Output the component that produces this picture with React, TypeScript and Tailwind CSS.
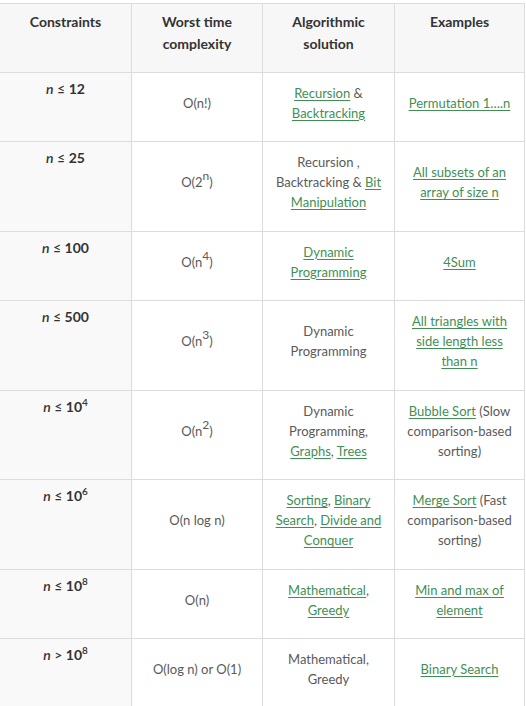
import React from "react";

const L = ({ children }: { children: React.ReactNode }) => (
  <a className="text-[#3f8f55] underline underline-offset-2 decoration-1">{children}</a>
);

const Sup = ({ children }: { children: React.ReactNode }) => (
  <sup className="text-[10px] relative -top-[6px] font-semibold">{children}</sup>
);

const BigSup = ({ children }: { children: React.ReactNode }) => (
  <sup className="text-[12px] relative -top-[7px]">{children}</sup>
);

type Row = { h: string; op: string; c: React.ReactNode; t: React.ReactNode; a: React.ReactNode; e: React.ReactNode };

const rows: Row[] = [
  {
    h: "h-[69px]",
    op: "≤",
    c: <>12</>,
    t: <>O(n!)</>,
    a: (
      <>
        <L>Recursion</L> &amp;
        <br />
        <L>Backtracking</L>
      </>
    ),
    e: <L>Permutation 1….n</L>,
  },
  {
    h: "h-[90px]",
    op: "≤",
    c: <>25</>,
    t: (
      <>
        O(2<BigSup>n</BigSup>)
      </>
    ),
    a: (
      <>
        Recursion ,<br />
        Backtracking &amp; <L>Bit</L>
        <br />
        <L>Manipulation</L>
      </>
    ),
    e: (
      <>
        <L>All subsets of an</L>
        <br />
        <L>array of size n</L>
      </>
    ),
  },
  {
    h: "h-[69px]",
    op: "≤",
    c: <>100</>,
    t: (
      <>
        O(n<BigSup>4</BigSup>)
      </>
    ),
    a: (
      <>
        <L>Dynamic</L>
        <br />
        <L>Programming</L>
      </>
    ),
    e: <L>4Sum</L>,
  },
  {
    h: "h-[90px]",
    op: "≤",
    c: <>500</>,
    t: (
      <>
        O(n<BigSup>3</BigSup>)
      </>
    ),
    a: (
      <>
        Dynamic
        <br />
        Programming
      </>
    ),
    e: (
      <>
        <L>All triangles with</L>
        <br />
        <L>side length less</L>
        <br />
        <L>than n</L>
      </>
    ),
  },
  {
    h: "h-[89px]",
    op: "≤",
    c: (
      <>
        10<Sup>4</Sup>
      </>
    ),
    t: (
      <>
        O(n<BigSup>2</BigSup>)
      </>
    ),
    a: (
      <>
        Dynamic
        <br />
        Programming,
        <br />
        <L>Graphs</L>, <L>Trees</L>
      </>
    ),
    e: (
      <>
        <L>Bubble Sort</L> (Slow
        <br />
        comparison-based
        <br />
        sorting)
      </>
    ),
  },
  {
    h: "h-[90px]",
    op: "≤",
    c: (
      <>
        10<Sup>6</Sup>
      </>
    ),
    t: <>O(n log n)</>,
    a: (
      <>
        <L>Sorting</L>, <L>Binary</L>
        <br />
        <L>Search</L>, <L>Divide and</L>
        <br />
        <L>Conquer</L>
      </>
    ),
    e: (
      <>
        <L>Merge Sort</L> (Fast
        <br />
        comparison-based
        <br />
        sorting)
      </>
    ),
  },
  {
    h: "h-[69px]",
    op: "≤",
    c: (
      <>
        10<Sup>8</Sup>
      </>
    ),
    t: <>O(n)</>,
    a: (
      <>
        <L>Mathematical</L>,
        <br />
        <L>Greedy</L>
      </>
    ),
    e: (
      <>
        <L>Min and max of</L>
        <br />
        <L>element</L>
      </>
    ),
  },
  {
    h: "h-[69px]",
    op: ">",
    c: (
      <>
        10<Sup>8</Sup>
      </>
    ),
    t: <>O(log n) or O(1)</>,
    a: (
      <>
        Mathematical,
        <br />
        Greedy
      </>
    ),
    e: <L>Binary Search</L>,
  },
];

export default function App() {
  return (
    <div
      className="w-[526px] h-[706px] overflow-hidden bg-white pt-[3px]"
      style={{ fontFamily: "Lato, 'Noto Sans', sans-serif" }}
    >
      <table className="border-collapse table-fixed w-[525px] -ml-px">
        <colgroup>
          <col className="w-[132px]" />
          <col className="w-[131px]" />
          <col className="w-[132px]" />
          <col className="w-[130px]" />
        </colgroup>
        <thead>
          <tr className="h-[69px] bg-[#f7f7f7]">
            <th className="border border-[#dcdcdc] align-top pt-[7px] px-3 text-[14px] leading-[22px] font-bold text-[#333]">
              Constraints
            </th>
            <th className="border border-[#dcdcdc] align-top pt-[7px] px-3 text-[14px] leading-[22px] font-bold text-[#333]">
              Worst time
              <br />
              complexity
            </th>
            <th className="border border-[#dcdcdc] align-top pt-[7px] px-3 text-[14px] leading-[22px] font-bold text-[#333]">
              Algorithmic
              <br />
              solution
            </th>
            <th className="border border-[#dcdcdc] align-top pt-[7px] px-3 text-[14px] leading-[22px] font-bold text-[#333]">
              Examples
            </th>
          </tr>
        </thead>
        <tbody>
          {rows.map((r, i) => (
            <tr key={i} className={r.h}>
              <td className="border border-[#dcdcdc] bg-[#f9f9f9] align-top pt-[6px] text-center text-[14px] leading-[20px] font-bold text-[#333]">
                <span className="italic font-semibold">n</span>
                <span className="font-semibold">{r.op === "≤" ? " ≤ " : " > "}</span>
                {r.c}
              </td>
              <td className="border border-[#dcdcdc] text-center align-middle pb-[9px] text-[13px] leading-[20px] text-[#5a5a5a]">
                {r.t}
              </td>
              <td className="border border-[#dcdcdc] text-center align-middle pb-[9px] text-[13px] leading-[20px] text-[#5a5a5a]">
                {r.a}
              </td>
              <td className="border border-[#dcdcdc] text-center align-middle pb-[9px] text-[13px] leading-[20px] text-[#5a5a5a]">
                {r.e}
              </td>
            </tr>
          ))}
        </tbody>
      </table>
    </div>
  );
}
